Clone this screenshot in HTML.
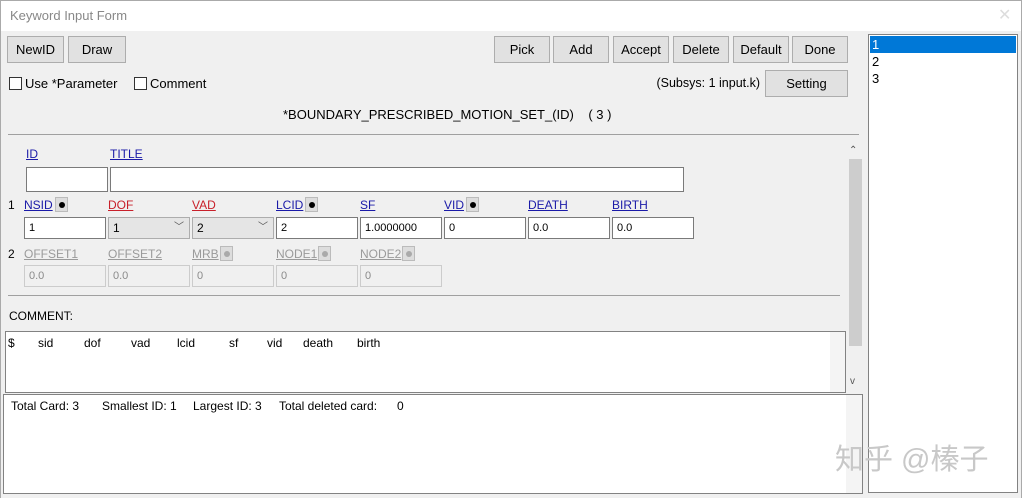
<!DOCTYPE html>
<html><head><style>
*{box-sizing:border-box;margin:0;padding:0}
body{width:1022px;height:498px;position:relative;background:#f0f0f0;font-family:"Liberation Sans",sans-serif;font-size:12px;color:#000;overflow:hidden}
.a{position:absolute;white-space:nowrap}
.btn{position:absolute;background:#e1e1e1;border:1px solid #adadad;text-align:center;font-size:13px;line-height:25px;height:27px;top:36px}
.in{position:absolute;background:#fff;border:1px solid #7a7a7a;height:22px;padding-left:4px;line-height:20px;font-size:11px}
.dis{background:#f0f0f0;border-color:#ccc;color:#8a8a8a}
.sel{background:#e5e5e5;border-color:#adadad;font-size:12px}
.lb{position:absolute;text-decoration:underline;font-size:12px;top:198px}
.bl{color:#1a1aa8}.rd{color:#c8202a}.gr{color:#9a9a9a}
.dot{position:absolute;width:13px;height:15px;background:#ddd;border:1px solid #bbb}
.dot:after{content:"";position:absolute;left:3px;top:4px;width:6px;height:6px;border-radius:50%;background:#000}
.dot.g:after{background:#aaa}
.cb{position:absolute;width:13px;height:13px;border:1px solid #333;background:#fff;top:77px}
.c{position:absolute;top:336px;font-size:12px}
.t{position:absolute;top:399px;font-size:12px}
</style></head><body>
<div class="a" style="left:0;top:0;width:1022px;height:31px;background:#fff;border:1px solid #aaa;border-bottom:none"></div>
<div class="a" style="left:10px;top:8px;font-size:13px;color:#888">Keyword Input Form</div>
<div class="a" style="left:998px;top:5px;font-size:16px;color:#ddd">✕</div>
<div class="a" style="left:0;top:31px;width:1px;height:467px;background:#aaa"></div>
<div class="a" style="left:1021px;top:31px;width:1px;height:467px;background:#aaa"></div>

<div class="btn" style="left:7px;width:57px">NewID</div>
<div class="btn" style="left:68px;width:58px">Draw</div>
<div class="btn" style="left:494px;width:56px">Pick</div>
<div class="btn" style="left:553px;width:56px">Add</div>
<div class="btn" style="left:613px;width:56px">Accept</div>
<div class="btn" style="left:673px;width:56px">Delete</div>
<div class="btn" style="left:733px;width:56px">Default</div>
<div class="btn" style="left:792px;width:56px">Done</div>
<div class="btn" style="left:765px;width:83px;top:70px">Setting</div>

<div class="cb" style="left:9px"></div><div class="a" style="left:25px;top:76px;font-size:13px">Use *Parameter</div>
<div class="cb" style="left:134px"></div><div class="a" style="left:150px;top:76px;font-size:13px">Comment</div>
<div class="a" style="right:262px;top:76px;font-size:12.5px">(Subsys: 1 input.k)</div>
<div class="a" style="left:283px;top:107px;font-size:13px">*BOUNDARY_PRESCRIBED_MOTION_SET_(ID) &nbsp;&nbsp;&nbsp;( 3 )</div>
<div class="a" style="left:8px;top:134px;width:851px;height:1px;background:#a0a0a0"></div>

<div class="a" style="left:868px;top:34px;width:150px;height:459px;background:#fff;border:1px solid #828282"></div>
<div class="a" style="left:870px;top:36px;width:146px;height:17px;background:#0078d7;color:#fff;padding-left:2px;font-size:13px;line-height:17px">1</div>
<div class="a" style="left:872px;top:54px;font-size:13px">2</div>
<div class="a" style="left:872px;top:71px;font-size:13px">3</div>

<div class="a" style="left:847px;top:143px;width:15px;height:248px;background:#f0f0f0"></div>
<div class="a" style="left:849px;top:145px;font-size:10px;color:#555">⌃</div>
<div class="a" style="left:849px;top:159px;width:13px;height:187px;background:#cdcdcd"></div>
<div class="a" style="left:850px;top:376px;font-size:10px;color:#555">v</div>

<div class="lb bl" style="left:26px;top:147px">ID</div>
<div class="lb bl" style="left:110px;top:147px">TITLE</div>
<div class="in" style="left:26px;top:167px;width:82px;height:25px"></div>
<div class="in" style="left:110px;top:167px;width:574px;height:25px"></div>

<div class="a" style="left:8px;top:198px;font-size:12px">1</div>
<div class="lb bl" style="left:24px">NSID</div><div class="dot" style="left:55px;top:197px"></div>
<div class="lb rd" style="left:108px">DOF</div>
<div class="lb rd" style="left:192px">VAD</div>
<div class="lb bl" style="left:276px">LCID</div><div class="dot" style="left:305px;top:197px"></div>
<div class="lb bl" style="left:360px">SF</div>
<div class="lb bl" style="left:444px">VID</div><div class="dot" style="left:466px;top:197px"></div>
<div class="lb bl" style="left:528px">DEATH</div>
<div class="lb bl" style="left:612px">BIRTH</div>

<div class="in" style="left:24px;top:217px;width:82px">1</div>
<div class="in sel" style="left:108px;top:217px;width:82px">1<span style="position:absolute;right:5px;color:#555;font-size:10px">﹀</span></div>
<div class="in sel" style="left:192px;top:217px;width:82px">2<span style="position:absolute;right:5px;color:#555;font-size:10px">﹀</span></div>
<div class="in" style="left:276px;top:217px;width:82px">2</div>
<div class="in" style="left:360px;top:217px;width:82px">1.0000000</div>
<div class="in" style="left:444px;top:217px;width:82px">0</div>
<div class="in" style="left:528px;top:217px;width:82px">0.0</div>
<div class="in" style="left:612px;top:217px;width:82px">0.0</div>

<div class="a" style="left:8px;top:247px;font-size:12px">2</div>
<div class="lb gr" style="left:24px;top:247px">OFFSET1</div>
<div class="lb gr" style="left:108px;top:247px">OFFSET2</div>
<div class="lb gr" style="left:192px;top:247px">MRB</div><div class="dot g" style="left:220px;top:246px"></div>
<div class="lb gr" style="left:276px;top:247px">NODE1</div><div class="dot g" style="left:318px;top:246px"></div>
<div class="lb gr" style="left:360px;top:247px">NODE2</div><div class="dot g" style="left:402px;top:246px"></div>
<div class="in dis" style="left:24px;top:265px;width:82px">0.0</div>
<div class="in dis" style="left:108px;top:265px;width:82px">0.0</div>
<div class="in dis" style="left:192px;top:265px;width:82px">0</div>
<div class="in dis" style="left:276px;top:265px;width:82px">0</div>
<div class="in dis" style="left:360px;top:265px;width:82px">0</div>

<div class="a" style="left:8px;top:295px;width:832px;height:1px;background:#a0a0a0"></div>
<div class="a" style="left:9px;top:309px;font-size:12px">COMMENT:</div>
<div class="a" style="left:5px;top:331px;width:841px;height:62px;background:#fff;border:1px solid #828282"></div>
<div class="c" style="left:8px">$</div>
<div class="c" style="left:38px">sid</div>
<div class="c" style="left:84px">dof</div>
<div class="c" style="left:131px">vad</div>
<div class="c" style="left:177px">lcid</div>
<div class="c" style="left:229px">sf</div>
<div class="c" style="left:267px">vid</div>
<div class="c" style="left:303px">death</div>
<div class="c" style="left:357px">birth</div>
<div class="a" style="left:830px;top:332px;width:15px;height:60px;background:#f4f4f4"></div>
<div class="a" style="left:3px;top:394px;width:860px;height:100px;background:#fff;border:1px solid #828282"></div>
<div class="a" style="left:846px;top:395px;width:16px;height:98px;background:#f4f4f4"></div>
<div class="t" style="left:11px">Total Card: 3</div>
<div class="t" style="left:102px">Smallest ID: 1</div>
<div class="t" style="left:193px">Largest ID: 3</div>
<div class="t" style="left:279px">Total deleted card:</div>
<div class="t" style="left:397px">0</div>
<div class="a" style="left:835px;top:436px;font-size:29px;color:#c8c8c8;font-family:'Liberation Sans','Noto Sans CJK SC',sans-serif">知乎 @榛子</div>
</body></html>
